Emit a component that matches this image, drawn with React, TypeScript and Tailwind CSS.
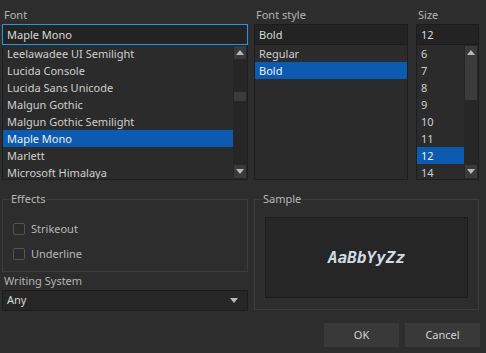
const fonts = [
  'Leelawadee UI Semilight',
  'Lucida Console',
  'Lucida Sans Unicode',
  'Malgun Gothic',
  'Malgun Gothic Semilight',
  'Maple Mono',
  'Marlett',
  'Microsoft Himalaya',
];
const styles = ['Regular', 'Bold'];
const sizes = ['6', '7', '8', '9', '10', '11', '12', '14'];

function Arrow({ down }: { down?: boolean }) {
  return (
    <svg width="8" height="5" viewBox="0 0 8 5">
      <path d={down ? 'M0 0h8L4 5z' : 'M4 0l4 5H0z'} fill="#b8b8b8" />
    </svg>
  );
}

function Scrollbar({ thumbTop, thumbH }: { thumbTop: number; thumbH: number }) {
  return (
    <div className="w-[14px] h-full bg-[#262626] flex flex-col items-center py-[1px]">
      <div className="w-[12px] h-[13px] bg-[#3a3a3a] flex items-center justify-center">
        <Arrow />
      </div>
      <div className="flex-1 w-[12px] flex flex-col">
        <div style={{ height: thumbTop }} />
        <div className="w-[12px] bg-[#3b3b3b]" style={{ height: thumbH }} />
      </div>
      <div className="w-[12px] h-[13px] bg-[#3a3a3a] flex items-center justify-center">
        <Arrow down />
      </div>
    </div>
  );
}

function Column({
  label,
  value,
  items,
  selected,
  focus,
  width,
  scroll,
}: {
  label: string;
  value: string;
  items: string[];
  selected: string;
  focus?: boolean;
  width: string;
  scroll?: { top: number; h: number };
}) {
  return (
    <div className={`${width} flex flex-col`}>
      <div className="h-[24px] pt-[7px] pl-[2px] leading-[16px] text-[#b4b4b4]">{label}</div>
      <div
        className={`h-[21px] border ${focus ? 'border-[#1f9ae0]' : 'border-[#1c1c1c]'} bg-[#232323] pl-[4px] leading-[19px] text-[#dadada]`}
      >
        {value}
      </div>
      <div className="h-[135px] border border-[#1e1e1e] border-t-0 bg-[#2b2b2b] flex overflow-hidden">
        <div className="flex-1 flex flex-col">
          {items.map((it) => (
            <div
              key={it}
              className={`h-[17px] shrink-0 leading-[17px] pl-[4px] whitespace-nowrap ${
                it === selected ? 'bg-[#0c5bb0] text-[#f0f0f0]' : 'text-[#cfcfcf]'
              }`}
            >
              {it}
            </div>
          ))}
        </div>
        {scroll && <Scrollbar thumbTop={scroll.top} thumbH={scroll.h} />}
      </div>
    </div>
  );
}

function Check({ label }: { label: string }) {
  return (
    <div className="flex items-center gap-[6px] h-[16px]">
      <div className="w-[12px] h-[12px] border border-[#545454] bg-[#2a2a2a] rounded-[2px]" />
      <span className="text-[#b8b8b8]">{label}</span>
    </div>
  );
}

export default function App() {
  return (
    <div
      className="w-[486px] h-[353px] bg-[#2d2d2d] text-[11px] flex flex-col"
      style={{ fontFamily: '"Noto Sans", "Open Sans", sans-serif' }}
    >
      <div className="flex pl-[2px]">
        <Column
          label="Font"
          value="Maple Mono"
          items={fonts}
          selected="Maple Mono"
          focus
          width="w-[246px]"
          scroll={{ top: 33, h: 9 }}
        />
        <div className="w-[6px]" />
        <Column label="Font style" value="Bold" items={styles} selected="Bold" width="w-[154px]" />
        <div className="w-[8px]" />
        <Column
          label="Size"
          value="12"
          items={sizes}
          selected="12"
          width="w-[63px]"
          scroll={{ top: 0, h: 41 }}
        />
      </div>

      <div className="flex pl-[2px] mt-[11px]">
        <div className="w-[246px] flex flex-col">
          <fieldset className="h-[81px] border border-[#3c3c3c]">
            <legend className="ml-[8px] leading-[16px] text-[#b8b8b8]">Effects</legend>
            <div className="flex flex-col pl-[10px] pt-[14px] gap-[9px]">
              <Check label="Strikeout" />
              <Check label="Underline" />
            </div>
          </fieldset>
          <div className="h-[18px] leading-[16px] pt-[1px] pl-[2px] text-[#b4b4b4]">Writing System</div>
          <div className="h-[21px] border border-[#1c1c1c] bg-[#262626] flex items-center justify-between pl-[4px] pr-[9px] text-[#dadada]">
            <span>Any</span>
            <Arrow down />
          </div>
        </div>
        <div className="w-[6px]" />
        <fieldset className="w-[225px] h-[119px] border border-[#3c3c3c]">
          <legend className="ml-[8px] leading-[16px] text-[#b8b8b8]">Sample</legend>
          <div className="px-[10px] pt-[10px]">
            <div className="h-[81px] border border-[#1c1c1c] bg-[#262626] flex items-center justify-center">
              <span
                className="text-[16px] font-bold italic text-[#d2dae2]"
                style={{ fontFamily: '"DejaVu Sans Mono", monospace' }}
              >
                AaBbYyZz
              </span>
            </div>
          </div>
        </fieldset>
      </div>

      <div className="flex justify-end gap-[6px] pr-[6px] mt-[12px]">
        <button className="w-[75px] h-[24px] bg-[#393939] text-[#d2d2d2]">OK</button>
        <button className="w-[75px] h-[24px] bg-[#393939] text-[#d2d2d2]">Cancel</button>
      </div>
    </div>
  );
}
